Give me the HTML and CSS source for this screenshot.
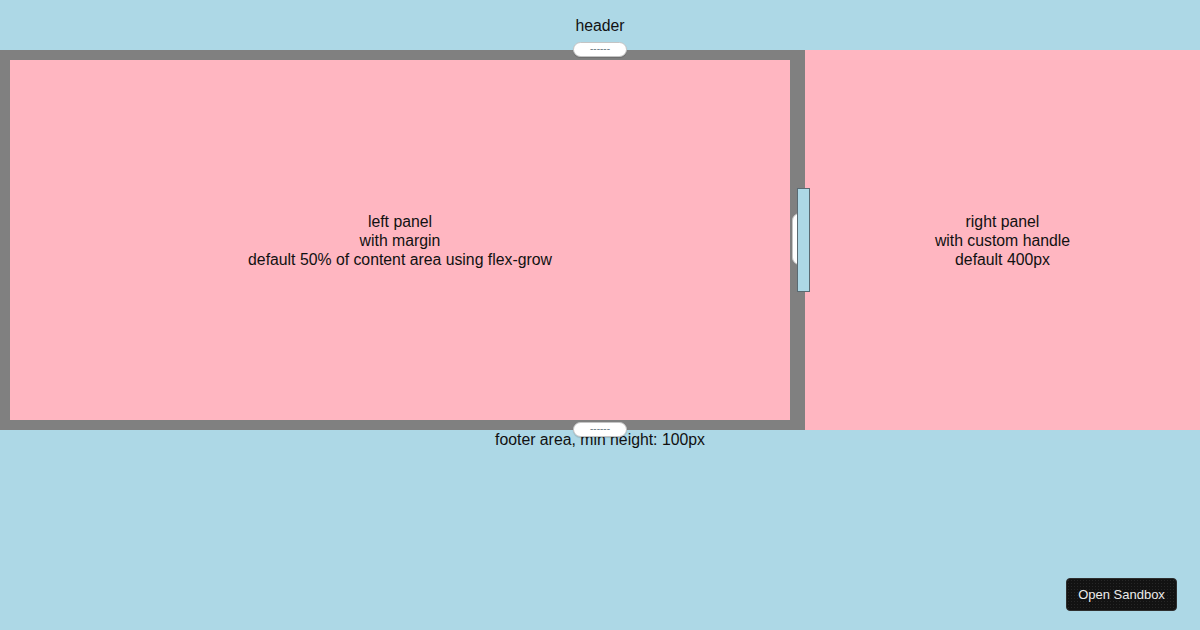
FILE: index.html
```html
<!DOCTYPE html>
<html>
<head>
<meta charset="utf-8">
<link rel="stylesheet" href="styles.css">
</head>
<body>
<div class="app">
  <div class="header">header</div>
  <div class="content">
    <div class="left">left panel<br>with margin<br>default 50% of content area using flex-grow</div>
    <div class="divider"></div>
    <div class="right">right panel<br>with custom handle<br>default 400px</div>
    <div class="pill pill-top">------</div>
    <div class="pill pill-bottom">------</div>
    <div class="pill-side"></div>
    <div class="custom-handle"></div>
  </div>
  <div class="footer">footer area, min height: 100px</div>
  <button class="sandbox">Open Sandbox</button>
</div>
</body>
</html>
```
FILE: styles.css
```css
html, body {
  margin: 0;
  padding: 0;
}
body {
  font-family: "Liberation Sans", Arial, sans-serif;
  font-size: 15.8px;
  line-height: 19px;
  color: #111;
}
.app {
  width: 1200px;
  height: 630px;
  display: flex;
  flex-direction: column;
  background: #add8e6;
  position: relative;
  overflow: hidden;
}
.header {
  height: 50px;
  display: flex;
  align-items: center;
  justify-content: center;
}
.content {
  height: 380px;
  display: flex;
  background: #808080;
  position: relative;
}
.left {
  flex: 1;
  margin: 10px;
  background: #ffb6c1;
  display: flex;
  align-items: center;
  justify-content: center;
  text-align: center;
}
.divider {
  width: 5px;
}
.right {
  width: 395px;
  background: #ffb6c1;
  display: flex;
  align-items: center;
  justify-content: center;
  text-align: center;
}
.footer {
  flex: 1;
  text-align: center;
}
.pill {
  position: absolute;
  left: 573px;
  width: 54px;
  height: 15px;
  box-sizing: border-box;
  background: #fff;
  border: 1px solid #c4c4c4;
  border-radius: 8px;
  font-size: 10px;
  line-height: 12px;
  color: #6a7a85;
  text-align: center;
  box-shadow: 0 1px 1px rgba(0,0,0,0.15);
}
.pill-top {
  top: -8px;
}
.pill-bottom {
  top: 372px;
}
.pill-side {
  position: absolute;
  left: 792px;
  top: 163px;
  width: 15px;
  height: 52px;
  box-sizing: border-box;
  background: #fff;
  border: 1px solid #c4c4c4;
  border-radius: 8px;
}
.custom-handle {
  position: absolute;
  left: 797px;
  top: 138px;
  width: 13px;
  height: 104px;
  box-sizing: border-box;
  background: #add8e6;
  border: 1px solid #5a6a72;
}
.sandbox {
  position: absolute;
  right: 23px;
  bottom: 19px;
  width: 111px;
  height: 33px;
  box-sizing: border-box;
  border: 1px solid #2e2e2e;
  border-radius: 4px;
  background-color: #121212;
  background-image: radial-gradient(circle, #262626 0.6px, transparent 0.8px);
  background-size: 3px 3px;
  color: #ececec;
  font-family: "Liberation Sans", Arial, sans-serif;
  font-size: 13px;
  padding: 0;
  cursor: pointer;
}
```
